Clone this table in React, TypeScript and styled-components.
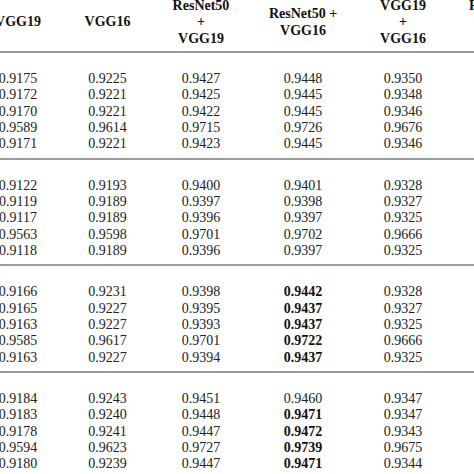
import React from "react";
import styled, { createGlobalStyle } from "styled-components";

const GlobalStyle = createGlobalStyle`
  html, body {
    margin: 0;
    padding: 0;
    background: #ffffff;
  }
  body {
    width: 474px;
    height: 474px;
    overflow: hidden;
  }
`;

const COLS = "96px 83px 104px 100px 100px 100px";

const Viewport = styled.div`
  width: 474px;
  height: 474px;
  overflow: hidden;
  background: #ffffff;
`;

const Table = styled.div`
  margin-top: -7px;
  margin-left: -30px;
  width: 600px;
  font-family: "Liberation Serif", "Times New Roman", serif;
  font-size: 14px;
  line-height: 16.4px;
  color: #1b1b1b;
`;

const HeaderRow = styled.div`
  display: grid;
  grid-template-columns: ${COLS};
  height: 58px;
  padding-top: 1px;
  box-sizing: border-box;
  align-items: center;
`;

const HeaderCell = styled.div`
  font-weight: 700;
  text-align: center;
  white-space: pre-line;
  color: #111;
`;

const Block = styled.div`
  border-top: 2px solid #9a9a9a;
  padding: 18px 0 5.2px;
`;

const Row = styled.div`
  display: grid;
  grid-template-columns: ${COLS};
  height: 16.3px;
  align-items: center;
`;

const Cell = styled.div<{ $bold?: boolean }>`
  text-align: center;
  font-weight: ${(p) => (p.$bold ? 700 : 400)};
  color: ${(p) => (p.$bold ? "#111" : "#222")};
`;

const headers = [
  "VGG19",
  "VGG16",
  "ResNet50\n+\nVGG19",
  "ResNet50 +\nVGG16",
  "VGG19\n+\nVGG16",
  "ResNet50 +\nVGG19 +\nVGG16",
];

type Val = [string, boolean?];

const blocks: Val[][][] = [
  [
    [["0.9175"], ["0.9225"], ["0.9427"], ["0.9448"], ["0.9350"]],
    [["0.9172"], ["0.9221"], ["0.9425"], ["0.9445"], ["0.9348"]],
    [["0.9170"], ["0.9221"], ["0.9422"], ["0.9445"], ["0.9346"]],
    [["0.9589"], ["0.9614"], ["0.9715"], ["0.9726"], ["0.9676"]],
    [["0.9171"], ["0.9221"], ["0.9423"], ["0.9445"], ["0.9346"]],
  ],
  [
    [["0.9122"], ["0.9193"], ["0.9400"], ["0.9401"], ["0.9328"]],
    [["0.9119"], ["0.9189"], ["0.9397"], ["0.9398"], ["0.9327"]],
    [["0.9117"], ["0.9189"], ["0.9396"], ["0.9397"], ["0.9325"]],
    [["0.9563"], ["0.9598"], ["0.9701"], ["0.9702"], ["0.9666"]],
    [["0.9118"], ["0.9189"], ["0.9396"], ["0.9397"], ["0.9325"]],
  ],
  [
    [["0.9166"], ["0.9231"], ["0.9398"], ["0.9442", true], ["0.9328"]],
    [["0.9165"], ["0.9227"], ["0.9395"], ["0.9437", true], ["0.9327"]],
    [["0.9163"], ["0.9227"], ["0.9393"], ["0.9437", true], ["0.9325"]],
    [["0.9585"], ["0.9617"], ["0.9701"], ["0.9722", true], ["0.9666"]],
    [["0.9163"], ["0.9227"], ["0.9394"], ["0.9437", true], ["0.9325"]],
  ],
  [
    [["0.9184"], ["0.9243"], ["0.9451"], ["0.9460"], ["0.9347"]],
    [["0.9183"], ["0.9240"], ["0.9448"], ["0.9471", true], ["0.9347"]],
    [["0.9178"], ["0.9241"], ["0.9447"], ["0.9472", true], ["0.9343"]],
    [["0.9594"], ["0.9623"], ["0.9727"], ["0.9739", true], ["0.9675"]],
    [["0.9180"], ["0.9239"], ["0.9447"], ["0.9471", true], ["0.9344"]],
  ],
];

export default function App() {
  return (
    <Viewport>
      <GlobalStyle />
      <Table>
        <HeaderRow>
          {headers.map((h, i) => (
            <HeaderCell key={i}>{h}</HeaderCell>
          ))}
        </HeaderRow>
        {blocks.map((rows, bi) => (
          <Block key={bi}>
            {rows.map((r, ri) => (
              <Row key={ri}>
                {r.map(([v, b], ci) => (
                  <Cell key={ci} $bold={b}>
                    {v}
                  </Cell>
                ))}
                <Cell />
              </Row>
            ))}
          </Block>
        ))}
      </Table>
    </Viewport>
  );
}
